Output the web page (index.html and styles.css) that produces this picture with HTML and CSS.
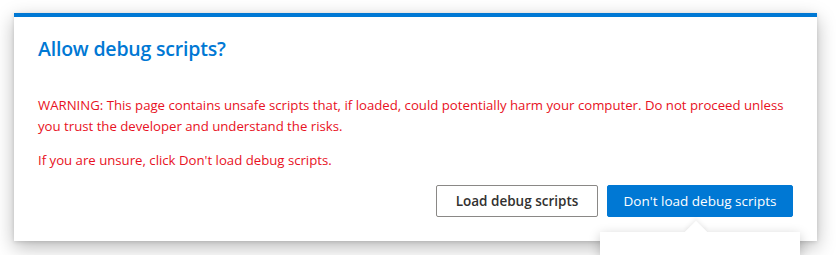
FILE: index.html
```html
<!DOCTYPE html>
<html>
<head>
<meta charset="utf-8">
<link rel="stylesheet" href="styles.css">
</head>
<body>
<div class="stage">
  <div class="dialog">
    <h1 class="title">Allow debug scripts?</h1>
    <div class="body">
      <p class="warn">WARNING: This page contains unsafe scripts that, if loaded, could potentially harm your computer. Do not proceed unless you trust the developer and understand the risks.</p>
      <p class="warn">If you are unsure, click Don't load debug scripts.</p>
    </div>
    <div class="actions">
      <button class="btn btn-default">Load debug scripts</button>
      <div class="primary-wrap">
        <button class="btn btn-primary">Don't load debug scripts</button>
        <div class="callout"></div>
      </div>
    </div>
  </div>
</div>
</body>
</html>
```
FILE: styles.css
```css
html, body {
  margin: 0;
  padding: 0;
  background: #ffffff;
  overflow: hidden;
}
body {
  width: 836px;
  height: 255px;
  font-family: "Open Sans", "Noto Sans", sans-serif;
}
.stage {
  padding: 13px 19px 0 14px;
}
.dialog {
  width: 803px;
  height: 228px;
  box-sizing: border-box;
  background: #fff;
  border-top: 4px solid #0078d4;
  box-shadow: 0 6px 18px rgba(0,0,0,0.28), 0 1px 4px rgba(0,0,0,0.12);
  display: flex;
  flex-direction: column;
  padding: 0 24px;
}
.title {
  margin: 18px 0 0 0;
  font-size: 19.5px;
  font-weight: 600;
  color: #0078d4;
  line-height: 28px;
  letter-spacing: -0.2px;
}
.body {
  margin-top: 32px;
}
.warn {
  margin: 0 0 13px 0;
  font-size: 13.2px;
  line-height: 21px;
  color: #e81123;
}
.actions {
  display: flex;
  justify-content: flex-end;
  gap: 9px;
  margin-top: 1px;
}
.btn {
  height: 32px;
  box-sizing: border-box;
  font-family: inherit;
  font-size: 13.5px;
  padding: 0;
  border-radius: 2px;
  white-space: nowrap;
  text-align: center;
  cursor: pointer;
}
.btn-default {
  width: 162px;
  background: #fff;
  border: 1px solid #8a8886;
  color: #323130;
  font-weight: 600;
}
.btn-primary {
  width: 186px;
  background: #0078d4;
  border: 1px solid #0078d4;
  color: #fff;
  font-weight: 400;
}
.primary-wrap {
  position: relative;
}
.callout {
  position: absolute;
  left: -7px;
  top: 47px;
  width: 200px;
  height: 24px;
  background: #fff;
  box-shadow: 0 3px 12px rgba(0,0,0,0.22);
}
.callout::before {
  content: "";
  position: absolute;
  left: 88px;
  top: -8px;
  width: 16px;
  height: 16px;
  background: #fff;
  transform: rotate(45deg);
  box-shadow: -2px -2px 4px rgba(0,0,0,0.06);
}
.callout::after {
  content: "";
  position: absolute;
  left: 80px;
  top: 0;
  width: 32px;
  height: 12px;
  background: #fff;
}
```
